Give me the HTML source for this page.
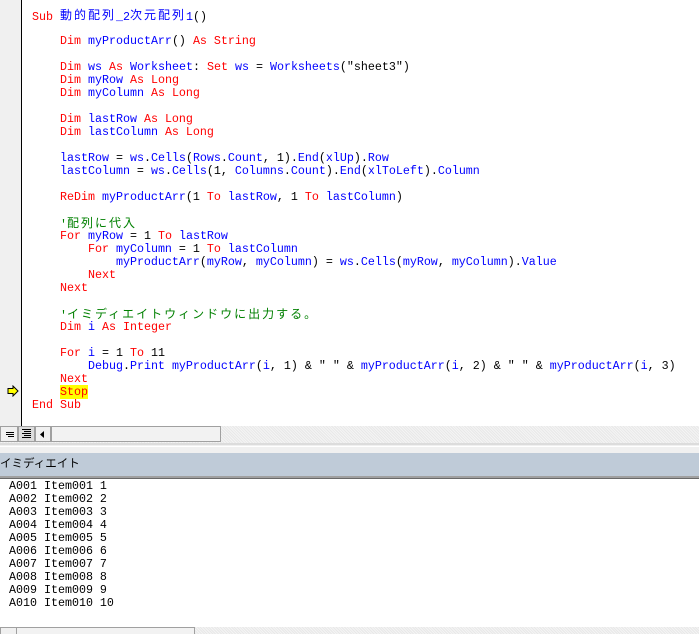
<!DOCTYPE html>
<html><head><meta charset="utf-8"><style>
body{margin:0;width:699px;height:634px;overflow:hidden;background:#fff;position:relative;font-family:"Liberation Mono","Noto Sans CJK JP",monospace;}
.a{position:absolute}
.c div,pre{margin:0;font-family:"Liberation Mono","Noto Sans CJK JP",monospace;font-size:11.67px;line-height:13px;color:#000;}
.c div{height:13px;white-space:pre;overflow:visible}
.k{color:#f00}.b{color:#00f}.g{color:#008000}
.j{font-family:"Noto Sans CJK JP",sans-serif;font-size:12px;letter-spacing:2px;line-height:13px;position:relative;top:-1px}
.hatch{background-color:#f4f4f4;background-image:repeating-linear-gradient(45deg,#e8e8e8 0 1px,transparent 1px 2px);}
.btn{position:absolute;top:426px;height:16px;background:#f0f0f0;border:1px solid #a0a0a0;box-sizing:border-box}
</style></head><body>
<div class="a" style="left:0;top:0;width:21px;height:426px;background:#f0f0f0"></div>
<div class="a" style="left:21px;top:0;width:1px;height:426px;background:#000"></div>
<div class="a c" style="left:32px;top:9px">
<div><span class="k">Sub</span> <span class="b"><span class="j">動的配列</span>_2<span class="j">次元配列</span>1</span>()</div>
<div> </div>
<div>    <span class="k">Dim</span> <span class="b">myProductArr</span>() <span class="k">As String</span></div>
<div> </div>
<div>    <span class="k">Dim</span> <span class="b">ws</span> <span class="k">As</span> <span class="b">Worksheet</span>: <span class="k">Set</span> <span class="b">ws</span> = <span class="b">Worksheets</span>("sheet3")</div>
<div>    <span class="k">Dim</span> <span class="b">myRow</span> <span class="k">As Long</span></div>
<div>    <span class="k">Dim</span> <span class="b">myColumn</span> <span class="k">As Long</span></div>
<div> </div>
<div>    <span class="k">Dim</span> <span class="b">lastRow</span> <span class="k">As Long</span></div>
<div>    <span class="k">Dim</span> <span class="b">lastColumn</span> <span class="k">As Long</span></div>
<div> </div>
<div>    <span class="b">lastRow</span> = <span class="b">ws</span>.<span class="b">Cells</span>(<span class="b">Rows</span>.<span class="b">Count</span>, 1).<span class="b">End</span>(<span class="b">xlUp</span>).<span class="b">Row</span></div>
<div>    <span class="b">lastColumn</span> = <span class="b">ws</span>.<span class="b">Cells</span>(1, <span class="b">Columns</span>.<span class="b">Count</span>).<span class="b">End</span>(<span class="b">xlToLeft</span>).<span class="b">Column</span></div>
<div> </div>
<div>    <span class="k">ReDim</span> <span class="b">myProductArr</span>(1 <span class="k">To</span> <span class="b">lastRow</span>, 1 <span class="k">To</span> <span class="b">lastColumn</span>)</div>
<div> </div>
<div>    <span class="g">'<span class="j">配列に代入</span></span></div>
<div>    <span class="k">For</span> <span class="b">myRow</span> = 1 <span class="k">To</span> <span class="b">lastRow</span></div>
<div>        <span class="k">For</span> <span class="b">myColumn</span> = 1 <span class="k">To</span> <span class="b">lastColumn</span></div>
<div>            <span class="b">myProductArr</span>(<span class="b">myRow</span>, <span class="b">myColumn</span>) = <span class="b">ws</span>.<span class="b">Cells</span>(<span class="b">myRow</span>, <span class="b">myColumn</span>).<span class="b">Value</span></div>
<div>        <span class="k">Next</span></div>
<div>    <span class="k">Next</span></div>
<div> </div>
<div>    <span class="g">'<span class="j">イミディエイトウィンドウに出力する。</span></span></div>
<div>    <span class="k">Dim</span> <span class="b">i</span> <span class="k">As Integer</span></div>
<div> </div>
<div>    <span class="k">For</span> <span class="b">i</span> = 1 <span class="k">To</span> 11</div>
<div>        <span class="b">Debug</span>.<span class="b">Print</span> <span class="b">myProductArr</span>(<span class="b">i</span>, 1) &amp; " " &amp; <span class="b">myProductArr</span>(<span class="b">i</span>, 2) &amp; " " &amp; <span class="b">myProductArr</span>(<span class="b">i</span>, 3)</div>
<div>    <span class="k">Next</span></div>
<div>    <span class="k" style="background:#ff0">Stop</span></div>
<div><span class="k">End Sub</span></div>
</div>
<svg class="a" style="left:7px;top:385px" width="12" height="12"><path d="M1 3.5H6V1L11 6 6 11V8.5H1Z" fill="#ff0" stroke="#000" stroke-width="1"/></svg>
<div class="a hatch" style="left:0;top:426px;width:699px;height:17px"></div>
<div class="btn" style="left:0;width:18px"></div>
<div class="btn" style="left:18px;width:17px;background:#dcdcdc"></div>
<div class="btn" style="left:35px;width:16px"></div>
<div class="btn" style="left:51px;width:170px;background:#f2f2f2"></div>
<svg class="a" style="left:3px;top:428px" width="14" height="12"><path d="M3 4.5h8M3 6.5h8M5 8.5h6" stroke="#000"/></svg>
<svg class="a" style="left:20px;top:428px" width="14" height="12"><path d="M2 1.5h9M4 3.5h7M2 5.5h9M4 7.5h7M2 9.5h9" stroke="#000"/></svg>
<svg class="a" style="left:38px;top:428px" width="10" height="12"><path d="M6 3v7L2 6.5Z" fill="#000"/></svg>
<div class="a" style="left:0;top:443px;width:699px;height:10px;background:#f0f0f0;border-top:2px solid #dcdcdc;box-sizing:border-box"></div>
<div class="a" style="left:0;top:446px;width:699px;height:1px;background:#fff"></div>
<div class="a" style="left:0;top:453px;width:699px;height:23px;background:#bfcbd8"></div>
<div class="a" style="left:0;top:455px;font-family:'Noto Sans CJK JP',sans-serif;font-size:11.5px;color:#000">イミディエイト</div>
<div class="a" style="left:0;top:476px;width:699px;height:3px;background:#a0a0a0;border-bottom:1px solid #696969;box-sizing:border-box"></div>
<pre class="a" style="left:9px;top:480px">A001 Item001 1
A002 Item002 2
A003 Item003 3
A004 Item004 4
A005 Item005 5
A006 Item006 6
A007 Item007 7
A008 Item008 8
A009 Item009 9
A010 Item010 10</pre>
<div class="a hatch" style="left:0;top:627px;width:699px;height:7px"></div>
<div class="a" style="left:0;top:627px;width:17px;height:7px;background:#f0f0f0;border:1px solid #a0a0a0;border-bottom:0;box-sizing:border-box"></div>
<div class="a" style="left:16px;top:627px;width:179px;height:7px;background:#f2f2f2;border:1px solid #a0a0a0;border-bottom:0;box-sizing:border-box"></div>
</body></html>
